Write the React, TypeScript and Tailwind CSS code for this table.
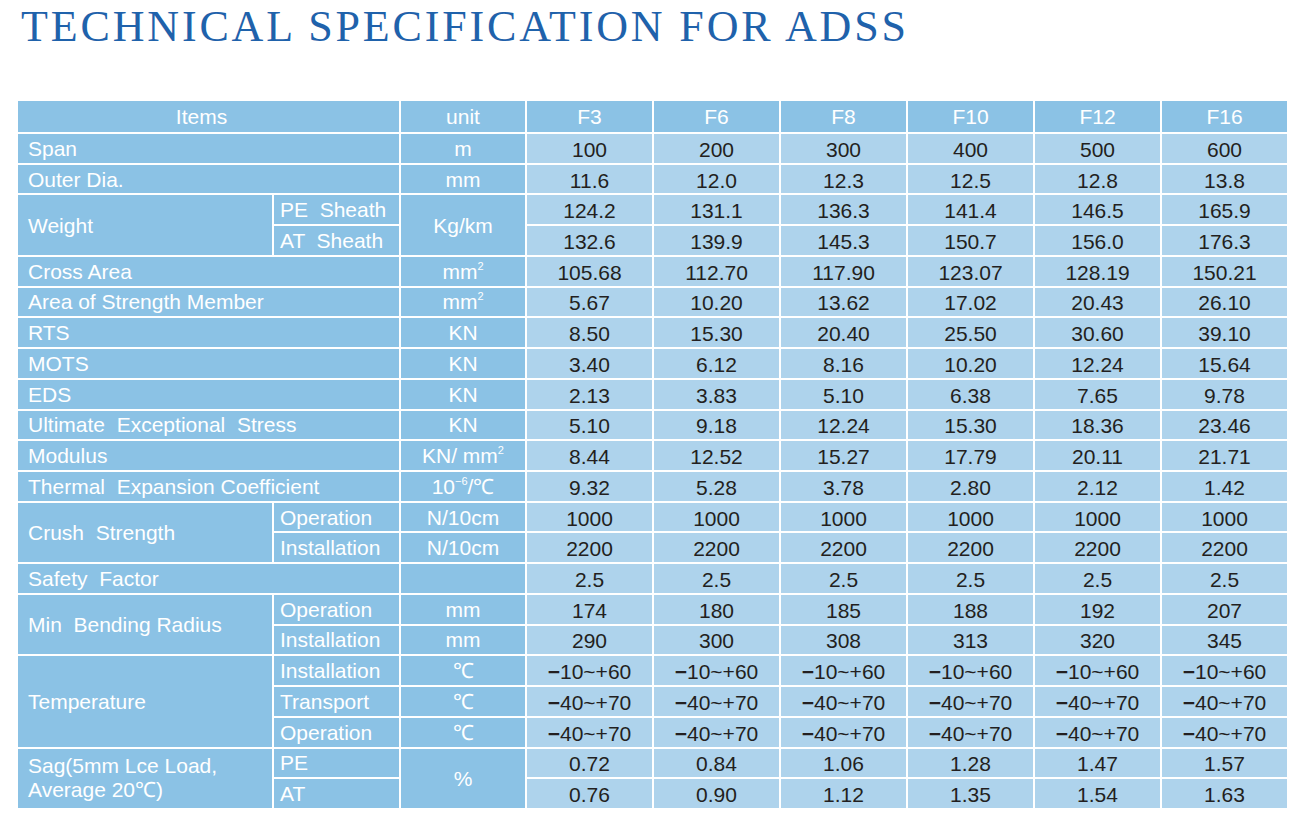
import React from "react";

const cols = ["F3", "F6", "F8", "F10", "F12", "F16"];

type Row = {
  label?: React.ReactNode;
  labelRows?: number; // row span of main label (with sub label)
  sub?: string;
  unit?: React.ReactNode;
  unitRows?: number;
  skipUnit?: boolean;
  values: React.ReactNode[];
};

const sup = (s: string) => <span className="relative -top-[5px] text-[11px]">{s}</span>;

const mm2 = <>mm{sup("2")}</>;

const range = (a: string) => (
  <>
    <span className="font-bold">−</span>
    {a}
  </>
);

const rows: Row[] = [
  { label: "Span", unit: "m", values: ["100", "200", "300", "400", "500", "600"] },
  { label: "Outer Dia.", unit: "mm", values: ["11.6", "12.0", "12.3", "12.5", "12.8", "13.8"] },
  { label: "Weight", labelRows: 2, sub: "PE  Sheath", unit: "Kg/km", unitRows: 2, values: ["124.2", "131.1", "136.3", "141.4", "146.5", "165.9"] },
  { sub: "AT  Sheath", skipUnit: true, values: ["132.6", "139.9", "145.3", "150.7", "156.0", "176.3"] },
  { label: "Cross Area", unit: mm2, values: ["105.68", "112.70", "117.90", "123.07", "128.19", "150.21"] },
  { label: "Area of Strength Member", unit: mm2, values: ["5.67", "10.20", "13.62", "17.02", "20.43", "26.10"] },
  { label: "RTS", unit: "KN", values: ["8.50", "15.30", "20.40", "25.50", "30.60", "39.10"] },
  { label: "MOTS", unit: "KN", values: ["3.40", "6.12", "8.16", "10.20", "12.24", "15.64"] },
  { label: "EDS", unit: "KN", values: ["2.13", "3.83", "5.10", "6.38", "7.65", "9.78"] },
  { label: "Ultimate  Exceptional  Stress", unit: "KN", values: ["5.10", "9.18", "12.24", "15.30", "18.36", "23.46"] },
  { label: "Modulus", unit: <>KN/ mm{sup("2")}</>, values: ["8.44", "12.52", "15.27", "17.79", "20.11", "21.71"] },
  { label: "Thermal  Expansion Coefficient", unit: <>10{sup("−6")}/℃</>, values: ["9.32", "5.28", "3.78", "2.80", "2.12", "1.42"] },
  { label: "Crush  Strength", labelRows: 2, sub: "Operation", unit: "N/10cm", values: Array(6).fill("1000") },
  { sub: "Installation", unit: "N/10cm", values: Array(6).fill("2200") },
  { label: "Safety  Factor", unit: "", values: Array(6).fill("2.5") },
  { label: "Min  Bending Radius", labelRows: 2, sub: "Operation", unit: "mm", values: ["174", "180", "185", "188", "192", "207"] },
  { sub: "Installation", unit: "mm", values: ["290", "300", "308", "313", "320", "345"] },
  { label: "Temperature", labelRows: 3, sub: "Installation", unit: "℃", values: Array(6).fill(range("10~+60")) },
  { sub: "Transport", unit: "℃", values: Array(6).fill(range("40~+70")) },
  { sub: "Operation", unit: "℃", values: Array(6).fill(range("40~+70")) },
  {
    label: (
      <span className="leading-[24px]">
        Sag(5mm Lce Load,
        <br />
        Average 20℃)
      </span>
    ),
    labelRows: 2,
    sub: "PE",
    unit: "%",
    unitRows: 2,
    values: ["0.72", "0.84", "1.06", "1.28", "1.47", "1.57"],
  },
  { sub: "AT", skipUnit: true, values: ["0.76", "0.90", "1.12", "1.35", "1.54", "1.63"] },
];

const rowSpan: Record<number, string> = { 2: "row-span-2", 3: "row-span-3" };

function Cells() {
  const out: React.ReactNode[] = [];
  rows.forEach((r, i) => {
    if (r.label !== undefined) {
      const span = r.labelRows ? rowSpan[r.labelRows] : "col-span-2";
      out.push(
        <div key={`l${i}`} className={`${span} flex items-center bg-[#8bc2e5] pl-[10px] whitespace-pre text-white`}>
          {r.label}
        </div>
      );
    }
    if (r.sub !== undefined) {
      out.push(
        <div key={`s${i}`} className="flex items-center bg-[#8bc2e5] pl-[6px] whitespace-pre text-white">
          {r.sub}
        </div>
      );
    }
    if (!r.skipUnit) {
      out.push(
        <div
          key={`u${i}`}
          className={`${r.unitRows ? rowSpan[r.unitRows] : ""} flex items-center justify-center bg-[#8bc2e5] text-white`}
        >
          {r.unit}
        </div>
      );
    }
    r.values.forEach((v, j) => {
      out.push(
        <div key={`v${i}-${j}`} className="flex items-center justify-center bg-[#aed3ec] pt-[2px] text-[#231f20]">
          {v}
        </div>
      );
    });
  });
  return <>{out}</>;
}

export default function App() {
  return (
    <div className="min-h-[819px] w-[1294px] bg-white">
      <h1 className="pl-[21px] pt-[5px] font-['Liberation_Serif',serif] text-[44px] leading-[44px] tracking-[2.85px] text-[#1f62ab]">
        TECHNICAL SPECIFICATION FOR ADSS
      </h1>
      <div className="ml-[18px] mt-[52px] grid h-[707px] w-[1269px] grid-cols-[254px_125px_124px_repeat(6,125px)] grid-rows-[31px_repeat(22,1fr)] gap-[2px] bg-white font-['Liberation_Sans',Arial,sans-serif] text-[21px] leading-none">
        <div className="col-span-2 flex items-center justify-center bg-[#8bc2e5] pr-[14px] text-white">Items</div>
        <div className="flex items-center justify-center bg-[#8bc2e5] text-white">unit</div>
        {cols.map((c) => (
          <div key={c} className="flex items-center justify-center bg-[#8bc2e5] text-white">
            {c}
          </div>
        ))}
        <Cells />
      </div>
    </div>
  );
}
